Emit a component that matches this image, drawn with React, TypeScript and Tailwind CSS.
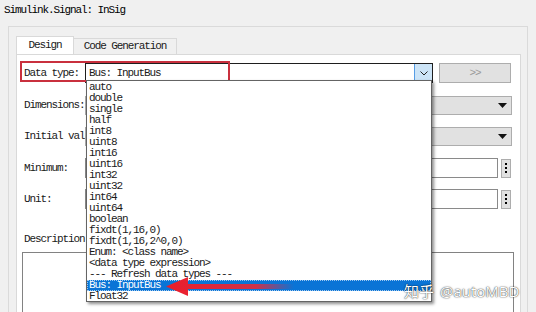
const items = [
  'auto',
  'double',
  'single',
  'half',
  'int8',
  'uint8',
  'int16',
  'uint16',
  'int32',
  'uint32',
  'int64',
  'uint64',
  'boolean',
  'fixdt(1,16,0)',
  'fixdt(1,16,2^0,0)',
  'Enum: <class name>',
  '<data type expression>',
  '--- Refresh data types ---',
  'Bus: InputBus',
  'Float32',
];

function SelectBox() {
  return (
    <div className="flex-1 h-full bg-[#e1e1e1] border border-[#adadad] flex items-center justify-end pr-[4px]">
      <svg width="9" height="5" viewBox="0 0 9 5">
        <path d="M0 0h9L4.5 5z" fill="#111" />
      </svg>
    </div>
  );
}

function InputBox() {
  return (
    <>
      <div className="flex-1 h-full bg-white border border-[#8a8a8a]" />
      <div className="ml-[3px] w-[10px] h-[19px] bg-[#e1e1e1] border border-[#adadad] flex flex-col items-center justify-center gap-[2px]">
        <span className="block w-[2px] h-[2px] bg-black" />
        <span className="block w-[2px] h-[2px] bg-black" />
        <span className="block w-[2px] h-[2px] bg-black" />
      </div>
    </>
  );
}

export default function App() {
  return (
    <div className="relative w-[536px] h-[312px] overflow-hidden bg-[#f0f0f0] text-[#1a1a1a] font-['Liberation_Mono',monospace] text-[11px] tracking-[-1.1px] leading-[13px]">
      {/* title */}
      <div className="h-[26px] pl-[4px] pt-[4px] text-black">Simulink.Signal: InSig</div>

      {/* group */}
      <div className="ml-[8px] w-[520px] h-[300px] border-t border-l border-r border-[#dadada] pl-[7px] pt-[9px] pr-[6px]">
        {/* tabs */}
        <div className="flex items-end h-[18px]">
          <div className="w-[58px] h-[18px] bg-white border border-b-0 border-[#d9d9d9] flex items-center justify-center">
            Design
          </div>
          <div className="w-[103px] h-[16px] bg-[#f0f0f0] border border-l-0 border-b-0 border-[#d9d9d9] flex items-center justify-center">
            Code Generation
          </div>
        </div>

        {/* panel */}
        <div className="h-[270px] bg-white border border-[#d9d9d9] pt-[8px] pl-[5px] pr-[8px]">
          {/* data type */}
          <div className="flex items-center h-[20px]">
            <div className="w-[63px] pl-[2px]">Data type:</div>
            <div className="w-[348px] h-full border border-[#1e1e1e] flex items-center">
              <div className="flex-1 pl-[3px]">Bus: InputBus</div>
              <div className="w-[18px] h-full bg-[#cce4f7] border-l border-[#569de5] flex items-center justify-center">
                <svg width="8" height="5" viewBox="0 0 8 5">
                  <path d="M0.5 0.5L4 4L7.5 0.5" stroke="#222" strokeWidth="1" fill="none" />
                </svg>
              </div>
            </div>
            <div className="ml-[6px] w-[72px] h-[20px] bg-[#e1e1e1] border border-[#adadad] flex items-center justify-center text-[#9a9a9a]">
              &gt;&gt;
            </div>
          </div>

          {/* dimensions */}
          <div className="flex items-center h-[19px] mt-[13px]">
            <div className="w-[63px] pl-[2px]">Dimensions:</div>
            <SelectBox />
          </div>

          {/* initial value */}
          <div className="flex items-center h-[19px] mt-[12px]">
            <div className="w-[63px] pl-[2px] whitespace-nowrap overflow-hidden">Initial valu</div>
            <SelectBox />
          </div>

          {/* minimum */}
          <div className="flex items-center h-[20px] mt-[12px] pr-[1px]">
            <div className="w-[63px] pl-[2px]">Minimum:</div>
            <InputBox />
          </div>

          {/* unit */}
          <div className="flex items-center h-[20px] mt-[11px] pr-[1px]">
            <div className="w-[63px] pl-[2px]">Unit:</div>
            <InputBox />
          </div>

          <div className="mt-[22px] h-[16px] pl-[2px] flex items-center">Description:</div>
          <div className="mt-[5px] mr-[-2px] h-[80px] border border-[#828282] bg-white" />
        </div>
      </div>

      {/* red highlight box */}
      <div className="absolute left-[20px] top-[61px] w-[210px] h-[21px] border-2 border-[#c9303e]" />

      {/* dropdown list */}
      <div className="absolute left-[86px] top-[80px] w-[346px] h-[222px] bg-white border border-[#646464] pt-[1px] shadow-[2px_2px_3px_rgba(0,0,0,0.45)]">
        {items.map((it) =>
          it === 'Bus: InputBus' ? (
            <div
              key={it}
              className="h-[11px] leading-[9px] pl-[1px] bg-[#0a74d6] text-white border border-dotted border-[#9ec8f0] whitespace-nowrap"
            >
              {it}
            </div>
          ) : (
            <div key={it} className="h-[11px] leading-[11px] pl-[2px] whitespace-nowrap">
              {it}
            </div>
          ),
        )}
      </div>

      {/* red arrow */}
      <svg className="absolute left-[166px] top-[276px]" width="130" height="21" viewBox="0 0 130 21">
        <defs>
          <linearGradient id="ar" x1="0" x2="1" y1="0" y2="0">
            <stop offset="0" stopColor="#ec1c2a" />
            <stop offset="0.7" stopColor="#e42a3a" stopOpacity="0.9" />
            <stop offset="1" stopColor="#e42a3a" stopOpacity="0" />
          </linearGradient>
        </defs>
        <path d="M0 10.5L22 1V8H128V13H22V20Z" fill="url(#ar)" />
      </svg>

      {/* watermark */}
      <div className="absolute left-[404px] top-[282px] flex items-center gap-[6px] text-white text-[15px] tracking-normal leading-[18px] [text-shadow:0_0_1px_rgba(0,0,0,0.8),0_0_2px_rgba(0,0,0,0.5)]">
        <span className="font-['Noto_Sans_CJK_SC',sans-serif]">知乎</span>
        <span className="font-['Open_Sans',sans-serif]">@autoMBD</span>
      </div>
    </div>
  );
}
